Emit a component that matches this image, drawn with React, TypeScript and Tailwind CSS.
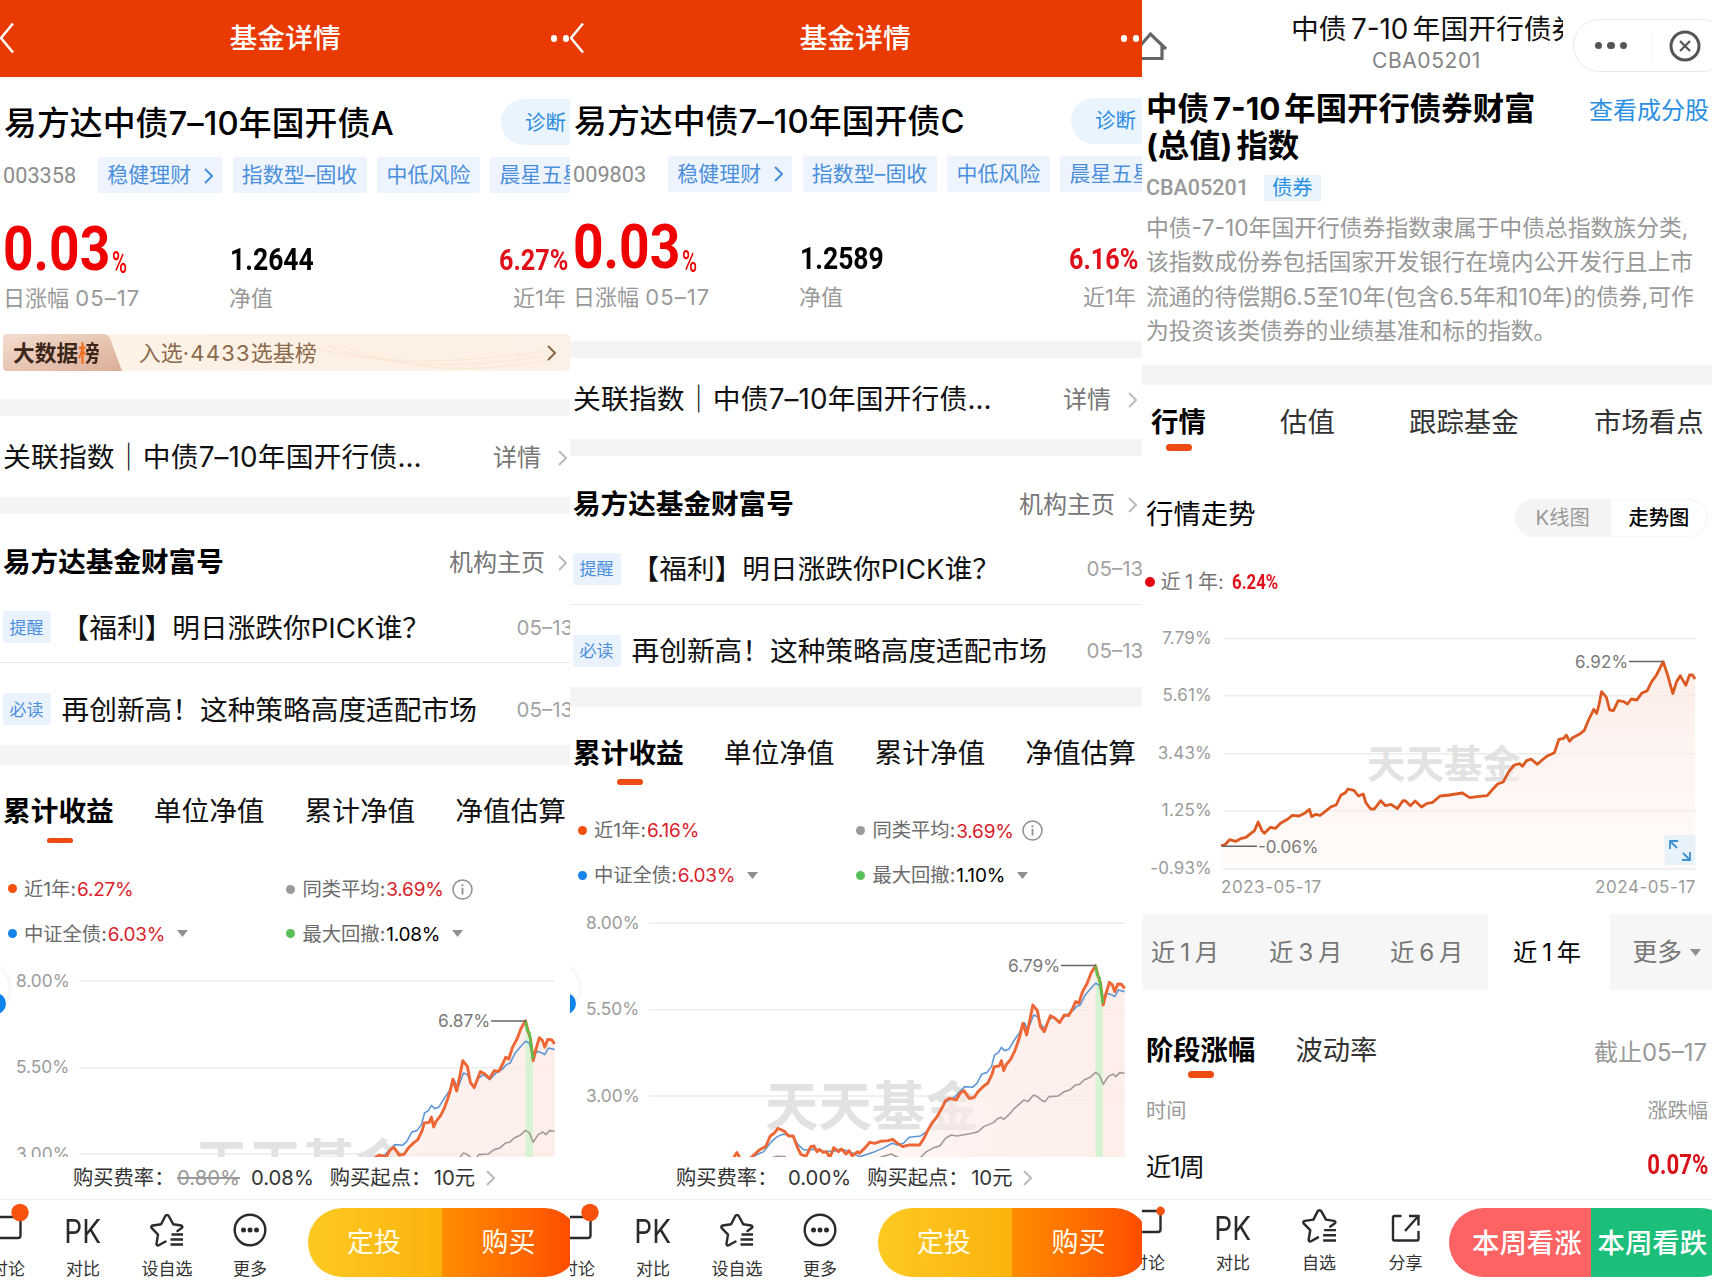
import type { ReactNode } from 'react';
import clsx from 'clsx';

type Point = [number, number];

interface Fund {
  name: string;
  code: string;
  nav: string;
  year: string;
  drawdown: string;
  peak: string;
  peakY: number;
  // vertical stretch of the fund's own curve, around the 0% line
  stretch: number;
  originalFee?: string;
  fee: string;
  ranked: boolean;
}

const FUNDS: Fund[] = [
  {
    name: '易方达中债7–10年国开债A',
    code: '003358',
    nav: '1.2644',
    year: '6.27%',
    drawdown: '1.08%',
    peak: '6.87%',
    peakY: 75,
    stretch: 1.012,
    originalFee: '0.80%',
    fee: '0.08%',
    ranked: true,
  },
  {
    name: '易方达中债7–10年国开债C',
    code: '009803',
    nav: '1.2589',
    year: '6.16%',
    drawdown: '1.10%',
    peak: '6.79%',
    peakY: 77.5,
    stretch: 1,
    fee: '0.00%',
    ranked: false,
  },
];

const FUND_CURVE: Point[] = [
  [440, 945], [455, 925], [465, 908], [473, 925], [490, 932], [505, 920], [523, 900], [540, 890], [552, 858], [562, 850],
  [572, 835], [582, 840], [590, 845], [600, 858], [612, 858], [622, 890], [632, 913], [645, 920], [658, 890], [666, 888],
  [674, 905], [680, 898], [690, 907], [698, 905], [708, 922], [718, 893], [730, 905], [738, 897], [750, 912], [758, 902],
  [766, 918], [780, 905], [785, 910], [800, 893], [812, 877], [825, 880], [840, 874], [860, 872], [872, 868], [882, 878],
  [898, 890], [915, 885], [942, 885], [952, 868], [962, 845], [975, 818], [988, 800], [1000, 775], [1010, 752], [1020, 745],
  [1038, 750], [1048, 730], [1058, 722], [1072, 745], [1085, 742], [1095, 725], [1110, 708], [1120, 700], [1132, 672],
  [1137, 650], [1150, 648], [1156, 632], [1162, 662], [1168, 645], [1180, 628], [1190, 605], [1198, 580], [1205, 555],
  [1212, 520], [1222, 555], [1232, 500], [1238, 465], [1250, 482], [1258, 530], [1268, 545], [1276, 520], [1284, 497],
  [1296, 505], [1308, 518], [1320, 495], [1332, 497], [1342, 475], [1350, 455], [1358, 460], [1368, 425], [1380, 400],
  [1390, 370], [1402, 347], [1408, 375], [1415, 400], [1422, 465], [1428, 435], [1438, 397], [1446, 405], [1452, 425],
  [1460, 402], [1470, 403], [1478, 415],
];

const DRAWDOWN_CURVE: Point[] = [[1402, 347], [1406, 375], [1412, 382], [1418, 430], [1421, 460]];

const BOND_CURVE: Point[] = [
  [490, 928], [505, 922], [520, 912], [535, 905], [548, 885], [558, 872], [570, 860], [585, 853], [600, 855], [612, 862],
  [625, 885], [640, 900], [665, 898], [690, 903], [715, 905], [735, 897], [760, 905], [785, 920], [800, 915], [825, 905],
  [850, 893], [870, 880], [885, 885], [900, 880], [915, 862], [945, 858], [960, 845], [980, 815], [1000, 775], [1012, 755],
  [1035, 740], [1050, 722], [1060, 710], [1080, 712], [1092, 700], [1105, 672], [1118, 668], [1130, 650], [1138, 615],
  [1148, 608], [1156, 592], [1164, 602], [1175, 598], [1190, 570], [1203, 548], [1216, 518], [1225, 540], [1240, 495],
  [1250, 500], [1258, 522], [1268, 535], [1280, 510], [1292, 500], [1308, 515], [1325, 495], [1340, 485], [1352, 470],
  [1362, 465], [1375, 435], [1390, 415], [1402, 400], [1412, 405], [1422, 450], [1432, 430], [1445, 435], [1452, 440],
  [1462, 420], [1478, 425],
];

const PEER_CURVE: Point[] = [
  [550, 926], [568, 919], [590, 920], [610, 935], [820, 940], [840, 922], [868, 912], [885, 922], [915, 940], [945, 922],
  [960, 905], [980, 893], [995, 888], [1010, 865], [1025, 855], [1040, 858], [1080, 850], [1095, 845], [1110, 830],
  [1135, 818], [1145, 807], [1155, 802], [1162, 808], [1175, 795], [1190, 775], [1205, 760], [1215, 750], [1225, 755],
  [1240, 735], [1250, 740], [1262, 752], [1270, 755], [1280, 740], [1305, 738], [1320, 725], [1335, 720], [1350, 705],
  [1360, 703], [1372, 690], [1388, 682], [1402, 667], [1412, 675], [1422, 703], [1435, 680], [1448, 672], [1455, 680],
  [1465, 668], [1478, 670],
];

const INDEX_CURVE: Point[] = [
  [245, 1277], [255, 1275], [268, 1259], [285, 1264], [300, 1255], [312, 1252], [322, 1243], [335, 1232], [345, 1206],
  [355, 1232], [362, 1240], [378, 1222], [392, 1225], [405, 1210], [425, 1197], [437, 1186], [455, 1188], [470, 1180],
  [483, 1168], [489, 1190], [500, 1183], [512, 1186], [525, 1175], [542, 1160], [555, 1155], [568, 1125], [580, 1118],
  [587, 1107], [603, 1111], [615, 1128], [628, 1122], [635, 1148], [648, 1167], [658, 1167], [675, 1142], [688, 1157],
  [703, 1153], [720, 1166], [735, 1142], [742, 1143], [755, 1157], [768, 1143], [785, 1161], [800, 1150], [815, 1147],
  [835, 1128], [860, 1125], [895, 1119], [915, 1133], [940, 1129], [962, 1127], [975, 1110], [990, 1092], [1005, 1086],
  [1020, 1055], [1035, 1035], [1050, 1031], [1057, 1039], [1068, 1022], [1080, 1017], [1097, 1033], [1110, 1020],
  [1125, 1007], [1143, 998], [1155, 958], [1168, 955], [1175, 945], [1184, 964], [1192, 953], [1210, 943], [1223, 932],
  [1235, 900], [1249, 868], [1257, 880], [1263, 855], [1270, 815], [1283, 832], [1292, 870], [1302, 872], [1315, 842],
  [1330, 845], [1340, 852], [1350, 837], [1365, 840], [1378, 820], [1393, 812], [1405, 785], [1418, 765], [1427, 745],
  [1436, 725], [1448, 765], [1462, 821], [1472, 785], [1482, 767], [1497, 796], [1507, 765], [1515, 765], [1522, 777],
];

const toLine = (points: Point[]) => points.map(([x, y]) => `${x},${y}`).join(' ');

function Chevron({ className }: { className?: string }) {
  return (
    <svg viewBox="0 0 9 16" fill="none" stroke="currentColor" strokeWidth="2" className={clsx('h-[16px] w-[9px] shrink-0', className)}>
      <path d="M1 1l7 7-7 7" />
    </svg>
  );
}

function Caret({ className }: { className?: string }) {
  return (
    <svg viewBox="0 0 11 7" className={clsx('h-[7px] w-[11px] shrink-0 fill-[#8f8f8f]', className)}>
      <path d="M0 0h11L5.500 7z" />
    </svg>
  );
}

function StarListIcon({ className }: { className?: string }) {
  return (
    <svg viewBox="0 0 34 33" fill="none" stroke="#2b2b2b" strokeWidth="2.400" strokeLinejoin="round" strokeLinecap="round" className={className}>
      <path d="M27.500 17L32 13.800c.8-.8.2-2.100-.9-2.300l-7.800-1.200L18.700 2c-.7-1.200-2.700-1.200-3.400 0l-4.200 8.300-8.300 1.200c-1.500.2-2 1.700-1 2.700l6.200 6.400-1.500 9c-.2 1.500 1.100 2.300 2.300 1.700l6.700-3.800" />
      <path d="M21.500 20.500H33M20.500 25.500H33M20.500 30.500H33" strokeLinecap="butt" />
    </svg>
  );
}

function MoreIcon() {
  return (
    <svg viewBox="0 0 34 34" className="size-[34px]">
      <circle cx="17" cy="17" r="15.300" fill="none" stroke="#2b2b2b" strokeWidth="2.400" />
      <circle cx="10.500" cy="17" r="2.500" fill="#2b2b2b" />
      <circle cx="17" cy="17" r="2.500" fill="#2b2b2b" />
      <circle cx="23.500" cy="17" r="2.500" fill="#2b2b2b" />
    </svg>
  );
}

function ChatIcon({ small }: { small?: boolean }) {
  return (
    <svg viewBox="0 0 36 36" className="size-[36px] overflow-visible">
      <path d="M-4 5H28Q30.500 5 30.500 7.500V23.500Q30.500 26 28 26H-4" fill="none" stroke="#2b2b2b" strokeWidth="2.400" />
      <circle cx={small ? 30.5 : 30} cy={small ? 5 : 0.5} r={small ? 4.4 : 8.7} fill="#f9520f" />
    </svg>
  );
}

function TabItem({ icon, label, className }: { icon: ReactNode; label: string; className?: string }) {
  return (
    <div className={clsx('flex w-[60px] shrink-0 flex-col items-center', className)}>
      <div className="flex h-[40px] items-center">{icon}</div>
      <span className="mt-[8px] text-[17px] leading-[22px] text-[#333]">{label}</span>
    </div>
  );
}

function Gap({ className }: { className?: string }) {
  return <div className={clsx('shrink-0 bg-[#f4f4f4]', className ?? 'h-[17px]')} />;
}

function Tag({ children }: { children: ReactNode }) {
  return (
    <span className="flex h-[36px] shrink-0 items-center rounded-xs bg-[#eef4fd] px-[9.300px] pt-[1px] text-[20.900px] tracking-[0.100px] text-[#4a8fdb]">
      {children}
    </span>
  );
}

function NewsRow({ tag, title, className }: { tag: string; title: string; className?: string }) {
  return (
    <div className={clsx('flex shrink-0 items-center pl-[2.500px]', className)}>
      <span className="flex h-[32px] w-[48px] shrink-0 items-center justify-center rounded-xs bg-[#eaf3fd] pt-[2px] text-[17px] text-[#4a8fdb]">
        {tag}
      </span>
      <span className="ml-[11px] w-[455px] shrink-0 pt-[3px] text-[27.700px] text-[#111]">{title}</span>
      <span className="pt-[2px] text-[20.500px] text-[#a3a3a3]">05–13</span>
    </div>
  );
}

function Legend({ color, label, value, valueClass, children }: { color: string; label: string; value: string; valueClass: string; children?: ReactNode }) {
  return (
    <div className="flex w-[278.500px] shrink-0 items-center">
      <i className={clsx('size-[9px] rounded-full', color)} />
      <span className="ml-[7.500px] pt-[1px] text-[19.300px] text-[#6b6b6b]">{label}:</span>
      <span className={clsx('ml-[1px] pt-[1px] text-[19px] tracking-[-0.2px]', valueClass)}>{value}</span>
      {children}
    </div>
  );
}

function FundChart({ fund }: { fund: Fund }) {
  // curve units to pixels; 8% sits at y=35
  const base = 'translate(0 35.300) scale(.38270 .33333) translate(-28.700 -220)';
  const own = `translate(0 ${311.7 * (1 - fund.stretch)}) scale(1 ${fund.stretch}) ${base}`;
  return (
    <svg viewBox="0 0 571 269" className="h-[269px] w-[571px]" fontFamily="Inter, sans-serif">
      <defs>
        <linearGradient id={`fill-${fund.code}`} x1="0" x2="1" y1="0" y2="0">
          <stop offset="0" stopColor="#fde9e3" stopOpacity="0" />
          <stop offset=".55" stopColor="#fdebe6" stopOpacity=".6" />
          <stop offset="1" stopColor="#fdeae4" stopOpacity=".8" />
        </linearGradient>
      </defs>
      <g stroke="#ececec" strokeWidth="1.500">
        <path d="M79.500 35.300H555M79.500 121.700H555M79.500 208H555" />
      </g>
      <g fill="#9b9b9b" fontSize="17.300">
        <text x="16" y="41">8.00%</text>
        <text x="16" y="127">5.50%</text>
        <text x="16" y="213.500">3.00%</text>
      </g>
      <text x="195" y="238" fontSize="53.500" fontWeight="700" fill="#e2e2e2" fontFamily="'Noto Sans CJK SC', sans-serif">
        天天基金
      </text>
      <polygon points={`${toLine(FUND_CURVE)} 1478,1100 440,1100`} transform={own} fill={`url(#fill-${fund.code})`} />
      <polygon points={`${toLine(DRAWDOWN_CURVE)} 1421,1100 1402,1100`} transform={own} fill="#c9f5c9" fillOpacity=".75" />
      <g fill="none" strokeLinejoin="round">
        <polyline points={toLine(PEER_CURVE)} transform={base} stroke="#a39a98" strokeWidth="1.600" vectorEffect="non-scaling-stroke" />
        <polyline points={toLine(BOND_CURVE)} transform={base} stroke="#5f97d6" strokeWidth="1.600" vectorEffect="non-scaling-stroke" />
        <polyline points={toLine(FUND_CURVE)} transform={own} stroke="#ee6636" strokeWidth="2.900" vectorEffect="non-scaling-stroke" />
        <polyline points={toLine(DRAWDOWN_CURVE)} transform={own} stroke="#5cbf4a" strokeWidth="2.500" vectorEffect="non-scaling-stroke" />
        <path d={`M491 ${fund.peakY}H526`} stroke="#666" strokeWidth="1.500" />
      </g>
      <text x="438" y={fund.peakY + 6.3} fontSize="17.300" fill="#7a7a7a">{fund.peak}</text>
    </svg>
  );
}

function FundPanel({ fund }: { fund: Fund }) {
  return (
    <section className={clsx('relative flex h-[1284px] shrink-0 flex-col overflow-hidden bg-white', fund.ranked ? 'w-[570px]' : 'w-[572px]')}>
      <header className="flex h-[76.500px] shrink-0 items-center bg-[#e93a02] text-white">
        <svg viewBox="0 0 14 32" fill="none" stroke="currentColor" strokeWidth="2.500" className="h-[32px] w-[14px] shrink-0">
          <path d="M13 1.500L1 16l12 14.500" />
        </svg>
        <span className="ml-[215.500px] shrink-0 pt-[2px] text-[27.800px] font-medium">基金详情</span>
        <span className="ml-[210px] flex shrink-0 gap-[5.500px]">
          <i className="size-[6.500px] rounded-full bg-white" />
          <i className="size-[6.500px] rounded-full bg-white" />
        </span>
      </header>

      <div className={clsx('flex h-[46px] shrink-0 items-center', fund.ranked ? 'mt-[22.500px]' : 'mt-[21px]')}>
        <h1 className="w-[497px] shrink-0 pt-[2px] pl-[4px] text-[32.800px] font-medium tracking-[0.100px] text-black">{fund.name}</h1>
        <span className="ml-[4px] flex h-[46px] w-[71px] shrink-0 items-center rounded-l-full bg-[#e9f4fd] pt-[2px] pl-[24px] text-[20.500px] text-[#2b8be0]">诊断</span>
      </div>

      <div className="mt-[12px] flex h-[36px] shrink-0 items-center gap-[10.500px]">
        <span className="ml-[3px] w-[84.500px] shrink-0 pt-[2px] font-[Roboto] text-[21.700px] text-[#8c8c8c]">{fund.code}</span>
        <Tag>
          稳健理财
          <Chevron className="ml-[12.500px]" />
        </Tag>
        <Tag>指数型–固收</Tag>
        <Tag>中低风险</Tag>
        <Tag>晨星五星</Tag>
      </div>

      <div className="mt-[27px] flex h-[54px] shrink-0 items-center font-[Roboto]">
        <span className="ml-[3px] w-[109px] shrink-0 origin-left scale-x-[.86] pt-[3px] text-[62px] font-bold text-[#f00000]">0.03</span>
        <span className="w-[118px] shrink-0 origin-left scale-x-[.66] pt-[31px] text-[31px] font-medium text-[#f00000]">%</span>
        <span className="w-[269px] shrink-0 origin-left scale-x-[.87] pt-[27px] text-[30.500px] font-bold text-black">{fund.nav}</span>
        <span className="shrink-0 origin-left scale-x-[.84] pt-[26px] text-[30px] font-bold text-[#e0101a]">{fund.year}</span>
      </div>

      <div className="mt-[12px] flex h-[24px] shrink-0 items-center text-[22px] text-[#999]">
        <span className="ml-[3px] w-[226px]">
          日涨幅 <span className="tracking-[1.100px]">05–17</span>
        </span>
        <span>净值</span>
        <span className="ml-[240px]">近1年</span>
      </div>

      {fund.ranked && (
        <div className="relative mt-[24px] ml-[3px] flex h-[37px] shrink-0 items-center rounded bg-linear-to-r from-[#fff3e9] via-[#fdf0e4] to-[#fdf1e7]">
          <svg viewBox="0 0 120 37" className="absolute top-0 left-0 h-[37px] w-[120px]">
            <defs>
              <linearGradient id="badge" x1="0" x2="1" y1="0" y2="1">
                <stop offset="0" stopColor="#f3ddd0" />
                <stop offset="1" stopColor="#dcae97" />
              </linearGradient>
            </defs>
            <path d="M4 0H100Q106 0 108 7L119 37H4Q0 37 0 33V4Q0 0 4 0Z" fill="url(#badge)" />
          </svg>
          <svg viewBox="0 0 300 30" fill="none" stroke="#f8e3cf" className="absolute right-[20px] bottom-0 h-[30px] w-[240px]">
            <path d="M0 4Q120 36 300 8M20 2Q130 42 300 14M40 2Q150 48 300 20" />
          </svg>
          <span className="relative ml-[10px] pt-[2px] text-[21.700px] font-bold text-[#3d261a]">
            大数据<span className="bg-linear-to-r from-[#f07020] from-35% to-[#3d261a] to-40% bg-clip-text text-transparent">榜</span>
          </span>
          <span className="relative ml-[39px] pt-[1px] text-[22px] text-[#8a6a4a]">
            入选<span className="tracking-[1.200px]">·4433</span>选基榜
          </span>
          <Chevron className="relative mr-[14px] ml-auto text-[#8a6a4a]" />
        </div>
      )}

      <Gap className={fund.ranked ? 'mt-[28px] h-[17px]' : 'mt-[32px] h-[17px]'} />
      <div className="flex h-[81px] shrink-0 items-center pt-[3px] pr-[4px]">
        <span className="ml-[3px] w-[490px] shrink-0 text-[27.800px] tracking-[0.150px] text-[#111]">关联指数｜中债7–10年国开行债…</span>
        <span className="text-[24px] text-[#777]">详情</span>
        <Chevron className="ml-[17px] text-[#bbb]" />
      </div>
      <Gap />

      <div className="flex h-[95px] shrink-0 items-center pt-[3px] pr-[4px]">
        <h2 className="ml-[3px] w-[446px] shrink-0 text-[27.600px] font-bold text-black">易方达基金财富号</h2>
        <span className="text-[24px] text-[#777]">机构主页</span>
        <Chevron className="ml-[13px] text-[#bbb]" />
      </div>
      <NewsRow tag="提醒" title="【福利】明日涨跌你PICK谁？" className="h-[36px]" />
      <div className="mt-[17px] h-px shrink-0 bg-[#ebebeb]" />
      <NewsRow tag="必读" title="再创新高！这种策略高度适配市场" className="h-[82px] pt-[10px]" />
      <Gap className="h-[20px]" />

      <nav className="flex h-[90px] shrink-0 items-center gap-[40px] pt-[4px] pl-[3px] text-[27.700px] text-[#111]">
        <b className="text-black">累计收益</b>
        <span>单位净值</span>
        <span>累计净值</span>
        <span>净值估算</span>
      </nav>
      <div className="-mt-[17.500px] ml-[47px] h-[5.500px] w-[26px] shrink-0 rounded-full bg-[#ee4b12]" />

      <div className="mt-[34px] flex h-[24px] shrink-0 items-center pl-[7.500px]">
        <Legend color="bg-[#f4500f]" label="近1年" value={fund.year} valueClass="text-[#d81e2c]" />
        <Legend color="bg-[#9a9a9a]" label="同类平均" value="3.69%" valueClass="text-[#d81e2c]">
          <svg viewBox="0 0 21 21" className="ml-[8px] size-[21px]">
            <circle cx="10.500" cy="10.500" r="9.500" fill="none" stroke="#8f8f8f" strokeWidth="1.500" />
            <path d="M10.500 8.800V15.500M10.500 5.200V7.200" stroke="#8f8f8f" strokeWidth="1.800" />
          </svg>
        </Legend>
      </div>
      <div className="mt-[21px] flex h-[24px] shrink-0 items-center pl-[7.500px]">
        <Legend color="bg-[#1583e9]" label="中证全债" value="6.03%" valueClass="text-[#d81e2c]">
          <Caret className="ml-[12px]" />
        </Legend>
        <Legend color="bg-[#58bf5a]" label="最大回撤" value={fund.drawdown} valueClass="text-black">
          <Caret className="ml-[12px]" />
        </Legend>
      </div>

      <div className="min-h-0 flex-1 overflow-hidden">
        <FundChart fund={fund} />
      </div>

      <div className={clsx('flex h-[42px] shrink-0 items-center bg-white text-[20.300px] text-[#333]', fund.ranked ? 'pl-[73px]' : 'pl-[106px]')}>
        <span className="w-[104px]">购买费率：</span>
        {fund.originalFee && <s className="mr-[11px] text-[#999]">{fund.originalFee}</s>}
        <span className={fund.ranked ? '' : 'ml-[8px]'}>{fund.fee}</span>
        <span className="ml-[16px] w-[104px]">购买起点：</span>
        <span>10元</span>
        <Chevron className="ml-[11px] text-[#bbb]" />
      </div>

      <footer className="flex h-[85px] shrink-0 border-t border-[#efefef] bg-white pt-[8px]">
        <TabItem icon={<ChatIcon />} label="讨论" className="-ml-[22px] pt-[2px]" />
        <TabItem icon={<span className="origin-center scale-x-[.85] pt-[2px] text-[33px] text-[#2b2b2b]">PK</span>} label="对比" className="ml-[15px] pt-[2px]" />
        <TabItem icon={<StarListIcon className="mt-[1px] h-[33px] w-[34px]" />} label="设自选" className="ml-[24px] pt-[2px]" />
        <TabItem icon={<MoreIcon />} label="更多" className="ml-[23px] pt-[2px]" />
        <div className="ml-[28px] flex h-[69px] w-[271px] shrink-0 overflow-hidden rounded-full text-[27px] text-[#fffbe8]">
          <span className="flex w-[134px] items-center bg-linear-to-r from-[#fdc921] to-[#fbb30c] pl-[39px]">定投</span>
          <span className="flex flex-1 items-center bg-linear-to-r from-[#ff8c00] to-[#ff4700] pl-[39.500px]">购买</span>
        </div>
      </footer>

      {/* edge of the floating assistant button */}
      <div className="absolute top-[962px] -left-[43px] size-[52px] rounded-full shadow-[0_0_5px_rgba(0,0,0,.1)]" />
      <div className="absolute top-[993px] -left-[15px] size-[21px] rounded-full bg-[#0f83ea]" />
    </section>
  );
}

function IndexChart() {
  const curve = 'scale(.37120 .33333) translate(-32 -600)';
  return (
    <svg viewBox="0 0 570 290" className="h-[290px] w-[570px] shrink-0" fontFamily="Inter, sans-serif">
      <defs>
        <linearGradient id="index-fill" x1="0" x2="0" y1="0" y2="1">
          <stop offset="0" stopColor="#fbe6df" stopOpacity=".75" />
          <stop offset="1" stopColor="#fef4f0" stopOpacity=".4" />
        </linearGradient>
      </defs>
      <path d="M82 18.500H554M82 75.700H554M82 133.700H554M82 191H554M82 249H554" stroke="#ececec" strokeWidth="1.500" />
      <g fill="#9b9b9b" fontSize="17" textAnchor="end" letterSpacing=".2">
        <text x="70" y="23.500">7.79%</text>
        <text x="70" y="81">5.61%</text>
        <text x="70" y="139">3.43%</text>
        <text x="70" y="196">1.25%</text>
        <text x="70" y="254">-0.93%</text>
      </g>
      <text x="225" y="158" fontSize="38.500" fontWeight="700" fill="#e2e2e2" fontFamily="'Noto Sans CJK SC', sans-serif">
        天天基金
      </text>
      <polygon points={`${toLine(INDEX_CURVE)} 1522,1347 245,1347`} transform={curve} fill="url(#index-fill)" />
      <polyline points={toLine(INDEX_CURVE)} transform={curve} fill="none" stroke="#dc5a22" strokeWidth="2.800" strokeLinejoin="round" vectorEffect="non-scaling-stroke" />
      <path d="M487 41.500H521M80 226.300H115" stroke="#666" strokeWidth="1.500" />
      <g fill="#7a7a7a" fontSize="17">
        <text x="433" y="47.500" letterSpacing=".2">6.92%</text>
        <text x="116" y="232.500">-0.06%</text>
      </g>
      <rect x="522.500" y="215" width="31" height="30" fill="#e8f2fb" />
      <path d="M528 229V221H536M528.500 221.500L535 228M548 232V240H540M547.500 239.500L541 233" fill="none" stroke="#3f8fd0" strokeWidth="1.800" />
      <g fill="#9b9b9b" fontSize="17" letterSpacing=".55">
        <text x="79" y="273">2023-05-17</text>
        <text x="554" y="273" textAnchor="end">2024-05-17</text>
      </g>
    </svg>
  );
}

function IndexPanel() {
  return (
    <section className="flex h-[1284px] w-[570px] shrink-0 flex-col overflow-hidden bg-white">
      <header className="flex h-[80px] shrink-0">
        <svg viewBox="0 0 26 32" fill="none" stroke="#666" strokeWidth="3.200" className="mt-[30px] h-[32px] w-[26px] shrink-0">
          <path d="M-3 17L8.500 4L24 19M0 28.500H20V16" />
        </svg>
        <div className="ml-[123px] flex w-[272px] shrink-0 flex-col overflow-hidden">
          <span className="mt-[9px] text-[27.800px] leading-[40px] [word-spacing:-3.500px] text-[#111]">中债 7-10 年国开行债券</span>
          <span className="ml-[81px] text-[21px] leading-[24px] tracking-[0.600px] text-[#858585]">CBA05201</span>
        </div>
        <div className="mt-[19px] ml-[10px] flex h-[53px] w-[155px] shrink-0 items-center rounded-full border border-[#e9e9e9]">
          <span className="ml-[21px] flex gap-[5px]">
            <i className="size-[7.300px] rounded-full bg-[#555]" />
            <i className="size-[7.300px] rounded-full bg-[#555]" />
            <i className="size-[7.300px] rounded-full bg-[#555]" />
          </span>
          <i className="ml-[24px] h-[28px] w-px bg-[#f4f4f4]" />
          <svg viewBox="0 0 32 32" fill="none" stroke="#555" className="ml-[17px] size-[32px]">
            <circle cx="16" cy="16" r="14" strokeWidth="3" />
            <path d="M11 11l10 10M21 11L11 21" strokeWidth="2.200" />
          </svg>
        </div>
      </header>

      <div className="mt-[11px] flex shrink-0 justify-between pr-[3px]">
        <h1 className="ml-[4px] text-[31.400px] leading-[36.500px] font-bold [word-spacing:-3.500px] whitespace-pre text-black">
          {'中债 7-10 年国开行债券财富\n(总值) 指数'}
        </h1>
        <a className="mt-[2px] text-[24px] leading-[36px] text-[#2b90e2]">查看成分股</a>
      </div>
      <div className="mt-[10px] flex h-[27px] shrink-0 items-center">
        <span className="ml-[4px] w-[118px] pt-[1px] font-[Roboto] text-[21.500px] font-medium text-[#999]">CBA05201</span>
        <span className="flex h-[26px] items-center bg-[#e9f4fd] px-[8px] pt-[1px] text-[20.300px] text-[#2b90e2]">债券</span>
      </div>
      <p className="mt-[10px] ml-[4px] shrink-0 text-[22.800px] leading-[34.300px] whitespace-pre text-[#999]">
        {'中债-7-10年国开行债券指数隶属于中债总指数族分类,\n该指数成份券包括国家开发银行在境内公开发行且上市\n流通的待偿期6.5至10年(包含6.5年和10年)的债券,可作\n为投资该类债券的业绩基准和标的指数。'}
      </p>
      <Gap className="mt-[17px] h-[20px] bg-[#efefef]" />

      <nav className="flex h-[74px] shrink-0 items-center pt-[1px] pl-[9px] text-[27.400px] text-[#333]">
        <b className="w-[129px] text-black">行情</b>
        <span className="w-[129px]">估值</span>
        <span className="w-[185px]">跟踪基金</span>
        <span>市场看点</span>
      </nav>
      <div className="-mt-[15px] ml-[24px] h-[7px] w-[26px] shrink-0 rounded-full bg-[#ee4b12]" />

      <div className="mt-[44px] flex h-[38px] shrink-0 items-center">
        <h2 className="ml-[4px] w-[368.500px] pt-[1px] text-[27.400px] text-black">行情走势</h2>
        <div className="mt-[8px] flex h-[38px] w-[193px] overflow-hidden rounded-full border border-[#f4f4f4] text-[20.300px]">
          <span className="flex w-[95px] items-center bg-[#f4f4f4] pl-[20px] text-[#999]">K线图</span>
          <span className="flex items-center pl-[18px] font-medium text-black">走势图</span>
        </div>
      </div>
      <div className="mt-[37px] flex h-[24px] shrink-0 items-center">
        <i className="ml-[3px] size-[9.500px] rounded-full bg-[#e60012]" />
        <span className="ml-[6px] w-[71px] text-[20px] [word-spacing:-1px] text-[#777]">近 1 年:</span>
        <span className="origin-left scale-x-[.84] font-[Roboto] text-[20px] font-bold text-[#e0101a]">6.24%</span>
      </div>
      <div className="mt-[26px] h-[294px] shrink-0">
        <IndexChart />
      </div>

      <div className="flex h-[76px] shrink-0 items-center bg-[#f6f6f6] text-[24.300px] [word-spacing:-2px] text-[#777]">
        <span className="w-[118px] pl-[9px]">近 1 月</span>
        <span className="w-[121px] pl-[9px]">近 3 月</span>
        <span className="w-[107px] pl-[9px]">近 6 月</span>
        <span className="flex h-full w-[122px] items-center bg-white pl-[25px] text-black">近 1 年</span>
        <span className="pl-[22.500px] text-[24.800px]">更多</span>
        <Caret className="ml-[8px]" />
      </div>

      <div className="mt-[39px] flex h-[42px] shrink-0 items-center pr-[5px]">
        <b className="ml-[4px] w-[149.500px] text-[27.300px] text-black">阶段涨幅</b>
        <span className="text-[27.300px] text-[#333]">波动率</span>
        <span className="mt-[5px] ml-auto text-[24px] text-[#999]">截止05–17</span>
      </div>
      <div className="ml-[46px] h-[7px] w-[26px] shrink-0 rounded-full bg-[#ee4b12]" />
      <div className="mt-[21px] flex h-[24px] shrink-0 items-center justify-between pr-[4px] pl-[4px] text-[20.200px] text-[#999]">
        <span>时间</span>
        <span>涨跌幅</span>
      </div>
      <div className="flex flex-1 items-center justify-between pt-[10px] pr-[4px] pl-[4px]">
        <span className="pt-[2px] text-[25.300px] tracking-[-1px] text-[#111]">近1周</span>
        <span className="mb-[2px] origin-right scale-x-[.82] font-[Roboto] text-[27px] font-bold text-[#d8101a]">0.07%</span>
      </div>

      <footer className="flex h-[85px] shrink-0 border-t border-[#efefef] pt-[8px]">
        <TabItem icon={<ChatIcon small />} label="讨论" className="-mt-[4px] -ml-[24px]" />
        <TabItem icon={<span className="scale-x-[.85] pt-[8px] text-[33px] text-[#2b2b2b]">PK</span>} label="对比" className="-mt-[4px] ml-[25px]" />
        <TabItem icon={<StarListIcon className="mt-[3px] h-[36px] w-[35px]" />} label="自选" className="-mt-[4px] ml-[26px]" />
        <TabItem
          icon={
            <svg viewBox="0 0 30 30" fill="none" stroke="#2b2b2b" strokeWidth="2.400" className="mt-[7px] size-[30px]">
              <path d="M10.500 3H3.500Q2 3 2 4.500V26Q2 27.500 3.500 27.500H26Q27.500 27.500 27.500 26V18M18 3H27.500V12.500M27 3.500L14 18" />
            </svg>
          }
          label="分享"
          className="-mt-[4px] ml-[26.500px]"
        />
        <div className="ml-[13px] flex h-[69px] w-[286px] shrink-0 overflow-hidden rounded-full text-[27.400px] font-medium text-white">
          <span className="flex w-[142px] items-center bg-[#fe6363] pt-[2px] pl-[23.500px]">本周看涨</span>
          <span className="flex flex-1 items-center bg-[#1bbf7a] pt-[2px] pl-[7px]">本周看跌</span>
        </div>
      </footer>
    </section>
  );
}

export default function App() {
  return (
    <main className="flex h-[1284px] w-[1712px] overflow-hidden bg-white font-[Inter,'Noto_Sans_CJK_SC',sans-serif] leading-none whitespace-nowrap">
      {FUNDS.map((fund) => (
        <FundPanel key={fund.code} fund={fund} />
      ))}
      <IndexPanel />
    </main>
  );
}
